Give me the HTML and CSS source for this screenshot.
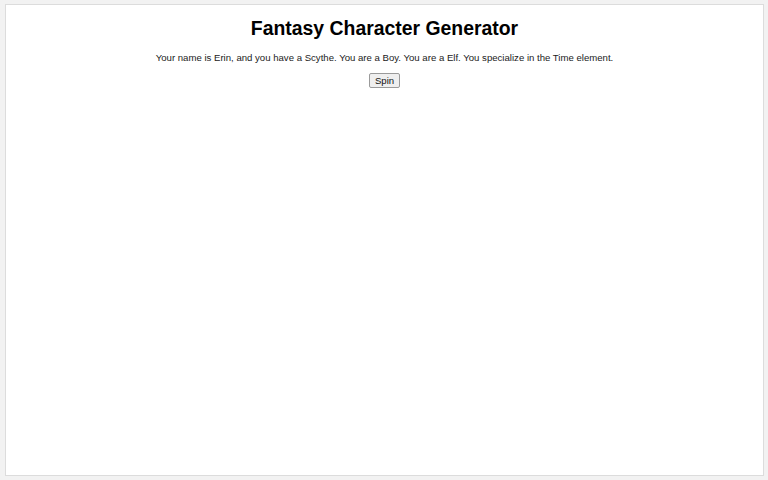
FILE: index.html
```html
<!DOCTYPE html>
<html>
<head>
<meta charset="utf-8">
<title>Fantasy Character Generator</title>
<link rel="stylesheet" href="styles.css">
</head>
<body>
<main class="panel">
  <h1 class="title">Fantasy Character Generator</h1>
  <p class="result">Your name is Erin, and you have a Scythe. You are a Boy. You are a Elf. You specialize in the Time element.</p>
  <button class="spin" type="button">Spin</button>
</main>
</body>
</html>
```
FILE: styles.css
```css
html, body {
  margin: 0;
  height: 100%;
}

body {
  background: #f2f2f2;
  padding: 4px 4px 4px 5px;
  box-sizing: border-box;
  font-family: "Liberation Sans", Arial, sans-serif;
  color: #000;
}

.panel {
  background: #fff;
  border: 1px solid #dcdcdc;
  height: 100%;
  box-sizing: border-box;
  text-align: center;
  padding-top: 13px;
}

.title {
  font-size: 19.4px;
  font-weight: bold;
  margin: 0 0 14px;
  line-height: 20px;
}

.result {
  font-size: 9.6px;
  margin: 0 0 6px;
  line-height: 12px;
  color: #222;
}

.spin {
  font-family: "Liberation Sans", Arial, sans-serif;
  font-size: 9.6px;
  line-height: 11px;
  height: 15px;
  padding: 0 5px;
  background: #efefef;
  border: 1px solid #9a9a9a;
  border-radius: 2px;
  color: #111;
}
```
